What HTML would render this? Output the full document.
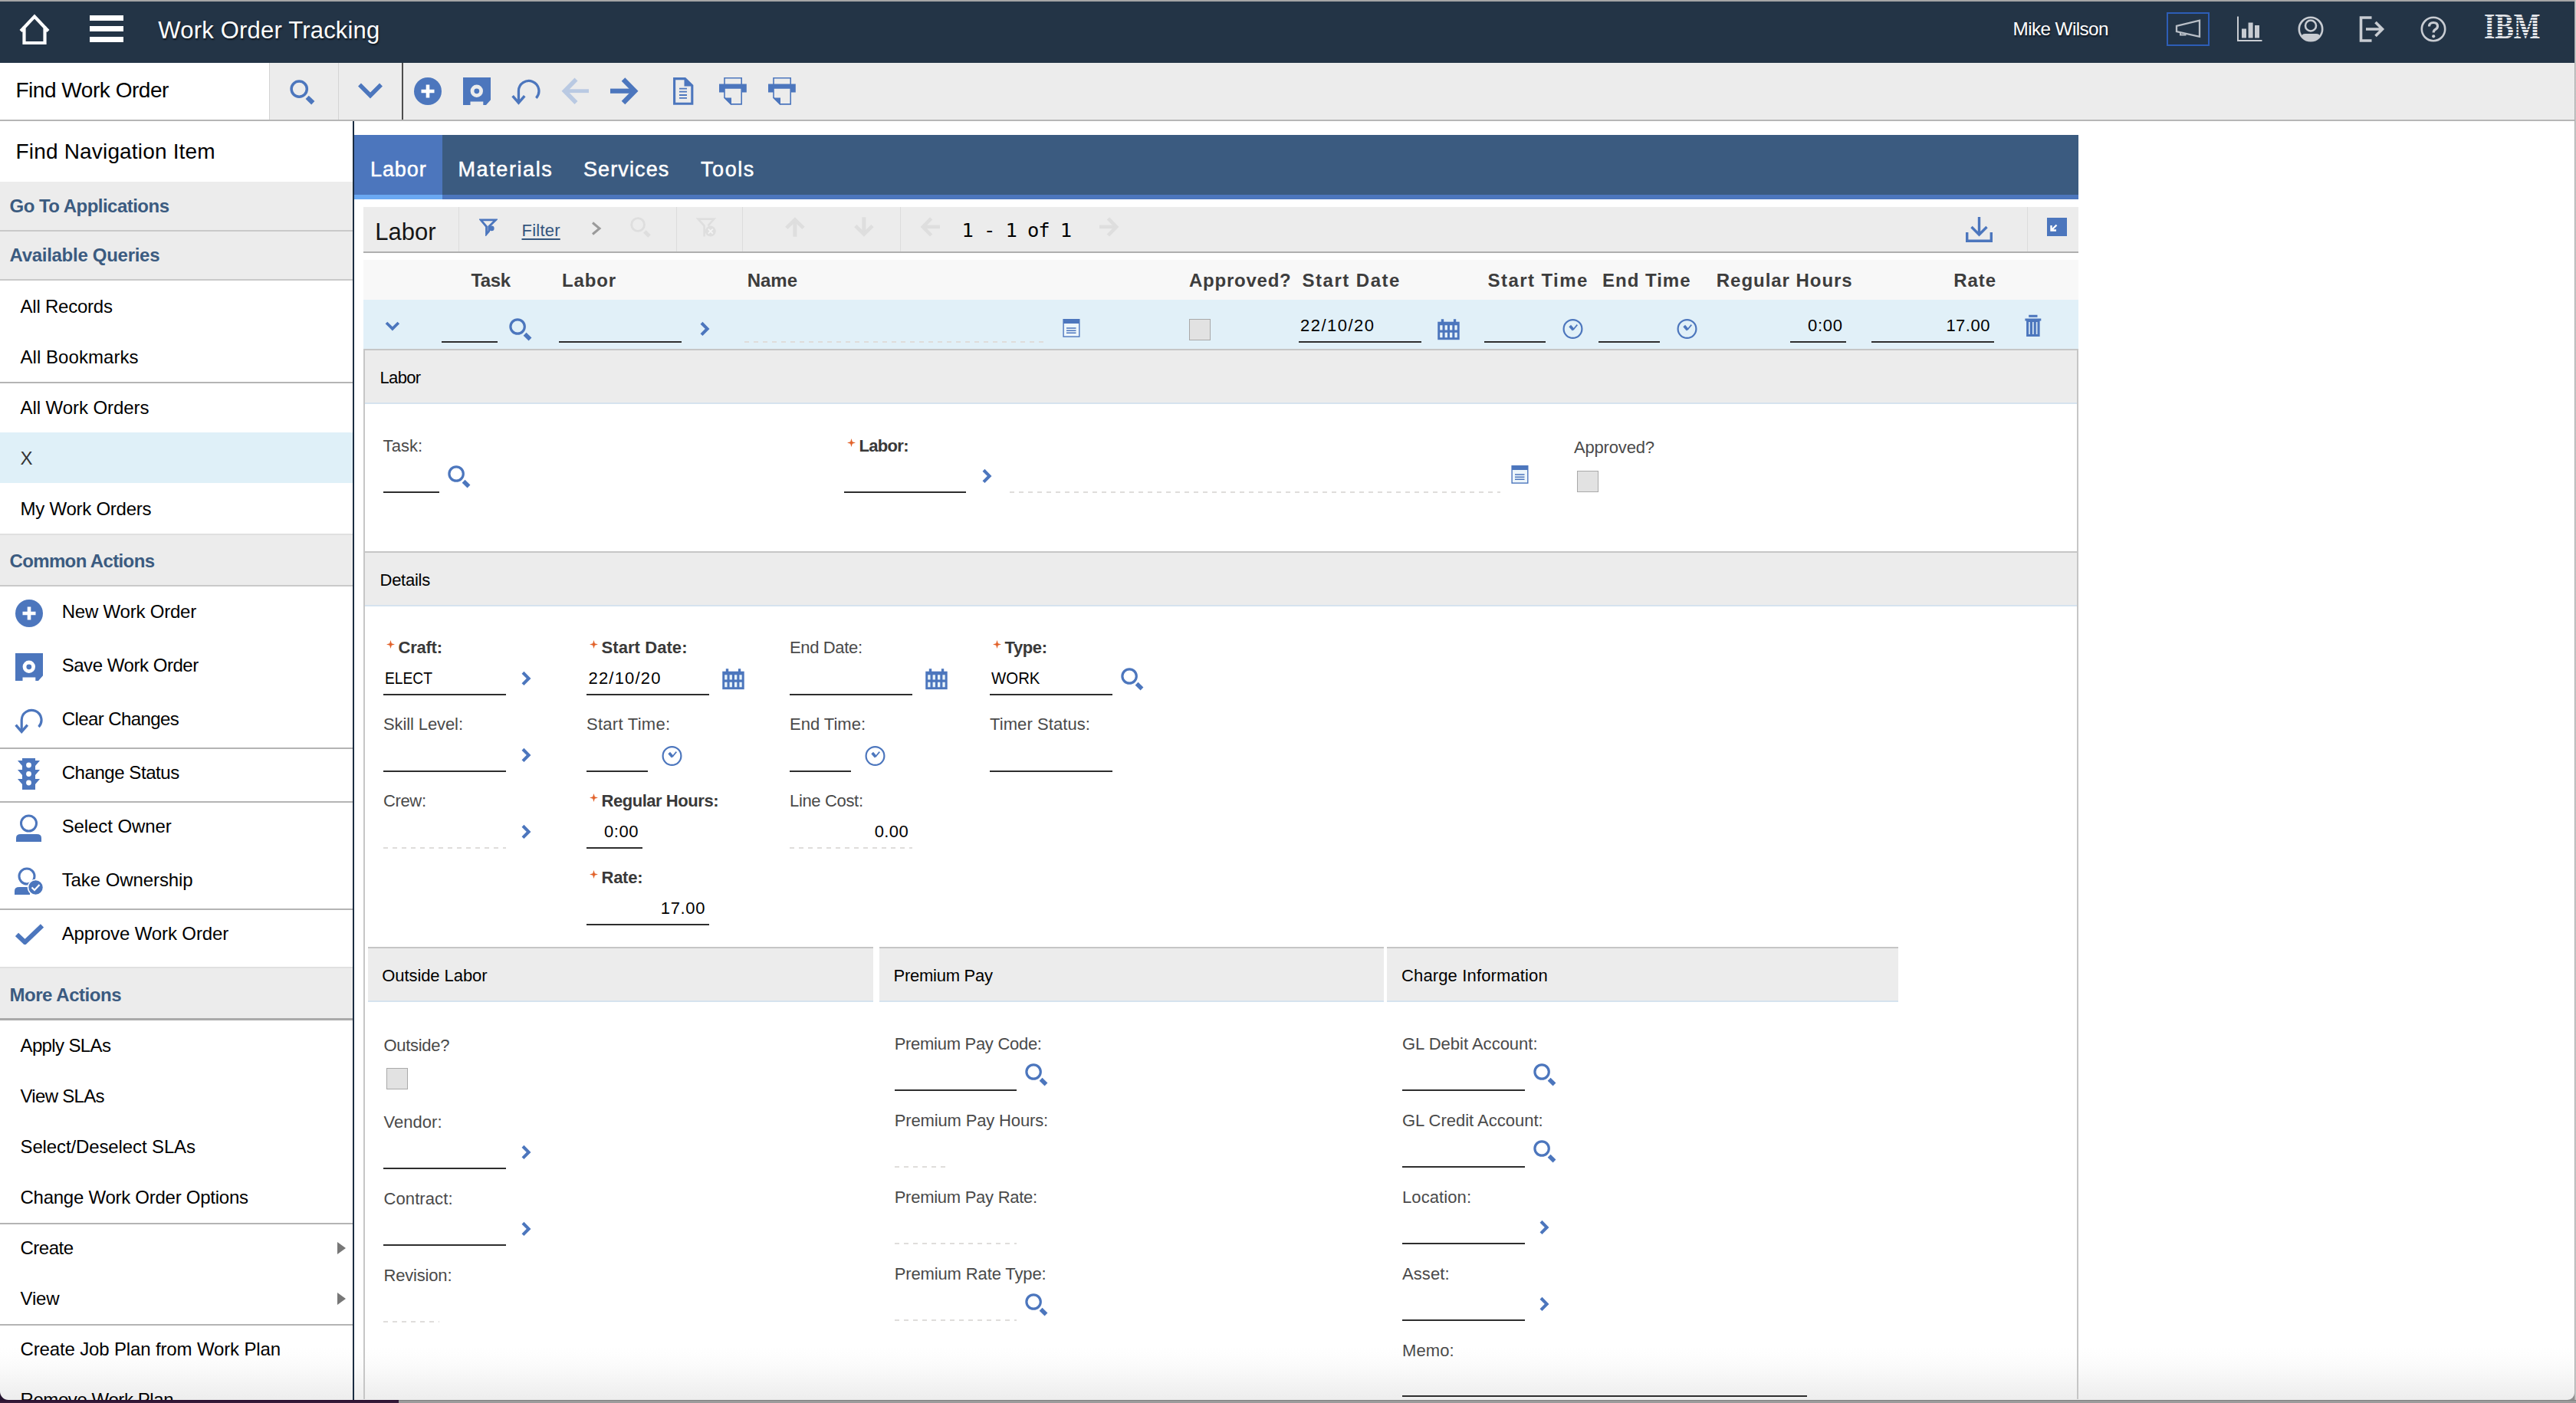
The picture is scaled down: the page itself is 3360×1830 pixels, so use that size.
<!DOCTYPE html>
<html lang="en"><head><meta charset="utf-8"><title>Work Order Tracking</title>
<style>
html,body{margin:0;padding:0;}
body{width:3360px;height:1830px;overflow:hidden;position:relative;background:#fff;font-family:"Liberation Sans",sans-serif;}
#app{position:absolute;left:0;top:0;width:3360px;height:1830px;overflow:hidden;}
#app div,#app span,#app svg{position:absolute;}
#app span{white-space:pre;line-height:1;}
</style></head><body><div id="app">
<div style="left:0px;top:0px;width:3360px;height:2px;background:#a6a6a6;"></div>
<div style="left:0px;top:2px;width:3358px;height:80px;background:#233446;"></div>
<div style="left:0px;top:82px;width:3360px;height:74px;background:#ececec;"></div>
<div style="left:0px;top:156px;width:3360px;height:2px;background:#b6b6b6;"></div>
<div style="left:0px;top:82px;width:351px;height:74px;background:#fff;"></div>
<div style="left:351px;top:82px;width:1px;height:74px;background:#d4d4d4;"></div>
<div style="left:441px;top:82px;width:1px;height:74px;background:#d4d4d4;"></div>
<div style="left:524px;top:82px;width:2px;height:74px;background:#4d4d4d;"></div>
<div style="left:3358px;top:0px;width:2px;height:1830px;background:none;background:linear-gradient(90deg,#a2a2a2,#d4d4d4);"></div>
<div style="left:117px;top:20px;width:44px;height:7px;background:#fff;"></div>
<div style="left:117px;top:34px;width:44px;height:7px;background:#fff;"></div>
<div style="left:117px;top:47.5px;width:44px;height:7px;background:#fff;"></div>
<div style="left:2826px;top:16px;width:56px;height:44px;background:none;border:2px solid #2d5db6;box-sizing:border-box;"></div>
<div style="left:462px;top:1757px;width:2896px;height:69px;background:linear-gradient(180deg,rgba(237,237,237,0) 0%,rgba(237,237,237,.22) 35%,rgba(237,237,237,1) 100%);"></div>
<div style="left:0;top:1757px;width:460px;height:69px;background:linear-gradient(180deg,rgba(237,237,237,0) 0%,rgba(237,237,237,.22) 35%,rgba(237,237,237,1) 100%);"></div>
<div style="left:460px;top:158px;width:2px;height:1668px;background:#1b2d42;"></div>
<div style="left:0px;top:237px;width:460px;height:63px;background:#ececec;"></div>
<div style="left:0px;top:300px;width:460px;height:2px;background:#c9c9c9;"></div>
<div style="left:0px;top:302px;width:460px;height:62px;background:#ececec;"></div>
<div style="left:0px;top:364px;width:460px;height:2px;background:#c9c9c9;"></div>
<div style="left:0px;top:498px;width:460px;height:2px;background:#b4b4b4;"></div>
<div style="left:0px;top:564px;width:460px;height:66px;background:#dff0f8;"></div>
<div style="left:0px;top:696px;width:460px;height:2px;background:#e0e0e0;"></div>
<div style="left:0px;top:698px;width:460px;height:65px;background:#ececec;"></div>
<div style="left:0px;top:763px;width:460px;height:2px;background:#c9c9c9;"></div>
<div style="left:0px;top:975px;width:460px;height:2px;background:#b4b4b4;"></div>
<div style="left:0px;top:1044.5px;width:460px;height:2px;background:#b4b4b4;"></div>
<div style="left:0px;top:1185px;width:460px;height:2px;background:#b4b4b4;"></div>
<div style="left:0px;top:1261px;width:460px;height:2px;background:#e0e0e0;"></div>
<div style="left:0px;top:1263px;width:460px;height:65px;background:#ececec;"></div>
<div style="left:0px;top:1328px;width:460px;height:3px;background:#aaa;"></div>
<div style="left:0px;top:1594.5px;width:460px;height:2px;background:#b4b4b4;"></div>
<div style="left:0px;top:1727px;width:460px;height:2px;background:#b4b4b4;"></div>
<div style="left:462px;top:176px;width:2249px;height:78px;background:#3b5b80;"></div>
<div style="left:462px;top:254px;width:2249px;height:5.6px;background:#4c76bd;"></div>
<div style="left:462px;top:176px;width:115px;height:78px;background:#4c76bd;"></div>
<div style="left:462px;top:254px;width:115px;height:5.6px;background:#6aa8f2;"></div>
<div style="left:474px;top:270px;width:2237px;height:58px;background:#ececec;"></div>
<div style="left:474px;top:328px;width:2237px;height:2px;background:#b0b0b0;"></div>
<div style="left:597.5px;top:270px;width:1.5px;height:58px;background:#dcdcdc;"></div>
<div style="left:881.5px;top:270px;width:1.5px;height:58px;background:#dcdcdc;"></div>
<div style="left:967.7px;top:270px;width:1.5px;height:58px;background:#dcdcdc;"></div>
<div style="left:1173.7px;top:270px;width:1.5px;height:58px;background:#dcdcdc;"></div>
<div style="left:2643.5px;top:270px;width:1.5px;height:58px;background:#dcdcdc;"></div>
<div style="left:474px;top:339px;width:2237px;height:52px;background:#f8f8f8;"></div>
<div style="left:474px;top:391px;width:2237px;height:64px;background:#e1f0f8;"></div>
<div style="left:474px;top:455px;width:2237px;height:2px;background:#c6c6c6;"></div>
<div style="left:576px;top:445px;width:73px;height:2px;background:#2e2e2e;"></div>
<div style="left:729px;top:445px;width:160px;height:2px;background:#2e2e2e;"></div>
<div style="left:971px;top:445px;width:396px;height:2px;background:none;background-image:repeating-linear-gradient(90deg,#dfdddb 0 6px,transparent 6px 12px);"></div>
<div style="left:1551px;top:415.5px;width:28px;height:28px;background:#e2e2e2;border:1.5px solid #a9a9a9;box-sizing:border-box;"></div>
<div style="left:1693.5px;top:445px;width:160.0px;height:2px;background:#2e2e2e;"></div>
<div style="left:1936px;top:445px;width:79.5px;height:2px;background:#2e2e2e;"></div>
<div style="left:2085px;top:445px;width:79.5px;height:2px;background:#2e2e2e;"></div>
<div style="left:2334.5px;top:445px;width:73.0px;height:2px;background:#2e2e2e;"></div>
<div style="left:2441px;top:445px;width:159.5px;height:2px;background:#2e2e2e;"></div>
<div style="left:474px;top:457px;width:2px;height:1368px;background:#c6c6c6;"></div>
<div style="left:2709px;top:457px;width:2px;height:1368px;background:#c6c6c6;"></div>
<div style="left:476px;top:457px;width:2233px;height:68px;background:#ececec;"></div>
<div style="left:476px;top:525px;width:2233px;height:2px;background:#d6e3ef;"></div>
<div style="left:476px;top:719px;width:2233px;height:2px;background:#c6c6c6;"></div>
<div style="left:476px;top:721px;width:2233px;height:68px;background:#ececec;"></div>
<div style="left:476px;top:789px;width:2233px;height:2px;background:#d6e3ef;"></div>
<div style="left:480px;top:1235px;width:659px;height:2px;background:#c6c6c6;"></div>
<div style="left:480px;top:1237px;width:659px;height:68px;background:#ececec;"></div>
<div style="left:480px;top:1305px;width:659px;height:2px;background:#d6e3ef;"></div>
<div style="left:1147px;top:1235px;width:658px;height:2px;background:#c6c6c6;"></div>
<div style="left:1147px;top:1237px;width:658px;height:68px;background:#ececec;"></div>
<div style="left:1147px;top:1305px;width:658px;height:2px;background:#d6e3ef;"></div>
<div style="left:1809px;top:1235px;width:667px;height:2px;background:#c6c6c6;"></div>
<div style="left:1809px;top:1237px;width:667px;height:68px;background:#ececec;"></div>
<div style="left:1809px;top:1305px;width:667px;height:2px;background:#d6e3ef;"></div>
<div style="left:499.6px;top:641px;width:73.19999999999993px;height:2px;background:#2e2e2e;"></div>
<div style="left:1100.8px;top:641px;width:159.70000000000005px;height:2px;background:#2e2e2e;"></div>
<div style="left:1317px;top:641px;width:640px;height:2px;background:none;background-image:repeating-linear-gradient(90deg,#dfdddb 0 6px,transparent 6px 12px);"></div>
<div style="left:2057px;top:613.5px;width:28px;height:28px;background:#e2e2e2;border:1.5px solid #a9a9a9;box-sizing:border-box;"></div>
<div style="left:500px;top:905px;width:160px;height:2px;background:#2e2e2e;"></div>
<div style="left:765px;top:905px;width:159.5px;height:2px;background:#2e2e2e;"></div>
<div style="left:1030px;top:905px;width:160px;height:2px;background:#2e2e2e;"></div>
<div style="left:1291px;top:905px;width:159.5px;height:2px;background:#2e2e2e;"></div>
<div style="left:500px;top:1005px;width:160px;height:2px;background:#2e2e2e;"></div>
<div style="left:765px;top:1005px;width:79.5px;height:2px;background:#2e2e2e;"></div>
<div style="left:1030px;top:1005px;width:80px;height:2px;background:#2e2e2e;"></div>
<div style="left:1291px;top:1005px;width:159.5px;height:2px;background:#2e2e2e;"></div>
<div style="left:500px;top:1105px;width:160px;height:2px;background:none;background-image:repeating-linear-gradient(90deg,#dfdddb 0 6px,transparent 6px 12px);"></div>
<div style="left:765px;top:1105px;width:73px;height:2px;background:#2e2e2e;"></div>
<div style="left:1030px;top:1105px;width:160px;height:2px;background:none;background-image:repeating-linear-gradient(90deg,#dfdddb 0 6px,transparent 6px 12px);"></div>
<div style="left:765px;top:1205px;width:159.5px;height:2px;background:#2e2e2e;"></div>
<div style="left:503.8px;top:1392.8px;width:28px;height:28px;background:#e2e2e2;border:1.5px solid #a9a9a9;box-sizing:border-box;"></div>
<div style="left:500px;top:1522.8px;width:160px;height:2px;background:#2e2e2e;"></div>
<div style="left:500px;top:1622.8px;width:160px;height:2px;background:#2e2e2e;"></div>
<div style="left:500px;top:1722.8px;width:73px;height:2px;background:none;background-image:repeating-linear-gradient(90deg,#dfdddb 0 6px,transparent 6px 12px);"></div>
<div style="left:1166.7px;top:1420.6px;width:159.29999999999995px;height:2px;background:#2e2e2e;"></div>
<div style="left:1166.7px;top:1520.6px;width:72.59999999999991px;height:2px;background:none;background-image:repeating-linear-gradient(90deg,#dfdddb 0 6px,transparent 6px 12px);"></div>
<div style="left:1166.7px;top:1620.6px;width:159.29999999999995px;height:2px;background:none;background-image:repeating-linear-gradient(90deg,#dfdddb 0 6px,transparent 6px 12px);"></div>
<div style="left:1166.7px;top:1720.6px;width:159.29999999999995px;height:2px;background:none;background-image:repeating-linear-gradient(90deg,#dfdddb 0 6px,transparent 6px 12px);"></div>
<div style="left:1829px;top:1420.6px;width:160px;height:2px;background:#2e2e2e;"></div>
<div style="left:1829px;top:1520.6px;width:160px;height:2px;background:#2e2e2e;"></div>
<div style="left:1829px;top:1620.6px;width:160px;height:2px;background:#2e2e2e;"></div>
<div style="left:1829px;top:1720.6px;width:160px;height:2px;background:#2e2e2e;"></div>
<div style="left:1829px;top:1820.3px;width:528px;height:2px;background:#2e2e2e;"></div>
<div style="left:0;top:1826px;width:3360px;height:4px;background:#9b9b9b;border-top:1px solid #808080;box-sizing:border-box;z-index:6;"></div>
<div style="left:0;top:1826px;width:520px;height:4px;background:linear-gradient(180deg,#2a0f2e,#3a1f3e);z-index:6;"></div>
<svg style="left:22px;top:14px;" width="46" height="48" viewBox="0 0 46 48"><path d="M6.5 25 L23 7.5 L39.5 25 M9.5 22.5 V42 H36.5 V22.5" fill="none" stroke="#fff" stroke-width="4.2" stroke-linejoin="miter" stroke-linecap="square"/></svg>
<svg style="left:377.5px;top:103.5px;" width="33" height="33" viewBox="0 0 30 30"><circle cx="11.1" cy="11" r="9.2" fill="none" stroke="#4c76bd" stroke-width="3.2"/><path d="M20.6 20.8L27.5 27.5" stroke="#4c76bd" stroke-width="5.5" stroke-linecap="butt"/></svg>
<svg style="left:466px;top:107px;" width="34" height="24" viewBox="0 0 34 24"><path d="M3 3.5 L17 17.5 L31 3.5" fill="none" stroke="#4c76bd" stroke-width="5.5"/></svg>
<svg style="left:540px;top:101px;" width="36" height="36" viewBox="0 0 36 36"><circle cx="18" cy="18" r="18" fill="#4c76bd"/><path d="M18 9.5V26.5M9.5 18H26.5" stroke="#fff" stroke-width="4.6"/></svg>
<svg style="left:604px;top:101px;" width="36" height="36" viewBox="0 0 36 36"><path d="M0 0H36V29.2L30 36H26.3V31.4H9.5V36H0Z" fill="#4c76bd"/><circle cx="17.8" cy="17.8" r="5.8" fill="none" stroke="#ececec" stroke-width="4.8"/></svg>
<svg style="left:666.5px;top:102px;" width="39" height="34.89473684210526" viewBox="0 0 38 34"><path d="M9.2 31V16A12.9 12.9 0 1 1 31.5 25.1" fill="none" stroke="#4c76bd" stroke-width="3.2"/><path d="M1.6 22.6L9.2 31.3L16.8 22.6" fill="none" stroke="#4c76bd" stroke-width="3.4"/></svg>
<svg style="left:732px;top:101px;" width="37" height="36" viewBox="0 0 37 36"><path d="M36 17.7H7" fill="none" stroke="#b9c9e2" stroke-width="4.8"/><path d="M19.5 2.5L4.5 17.7L19.5 33" fill="none" stroke="#b9c9e2" stroke-width="5.6"/></svg>
<svg style="left:796px;top:101px;" width="37" height="36" viewBox="0 0 37 36"><path d="M0 17.7H29" fill="none" stroke="#4c76bd" stroke-width="6.2"/><path d="M17 2.5L32 17.7L17 33" fill="none" stroke="#4c76bd" stroke-width="6.4"/></svg>
<svg style="left:878px;top:100.9px;" width="27" height="36" viewBox="0 0 27 36"><path d="M1.6 1.6H15.5L24.8 10.6V34.2H1.6Z" fill="none" stroke="#4c76bd" stroke-width="3.1"/><path d="M14.5 0.5L26 11.5H14.5Z" fill="#4c76bd"/><path d="M8 14.7H18M8 18.6H18M8 23H18M8 26.8H18" stroke="#4c76bd" stroke-width="1.8"/></svg>
<svg style="left:938px;top:100.9px;" width="36" height="36" viewBox="0 0 36 36"><path d="M7 9V0.8H29.2V9" fill="none" stroke="#4c76bd" stroke-width="1.6"/><path d="M0 8.5H35.8V19.4H0Z" fill="#4c76bd"/><path d="M7 13.9H29.2V34.9H15.5L7 26.4Z" fill="#ececec" stroke="#4c76bd" stroke-width="1.6"/><path d="M6.2 26.4H16V35.7H15.5Z" fill="#4c76bd"/></svg>
<svg style="left:1002.2px;top:100.9px;" width="36" height="36" viewBox="0 0 36 36"><path d="M7 9V0.8H29.2V9" fill="none" stroke="#4c76bd" stroke-width="1.6"/><path d="M0 8.5H35.8V19.4H0Z" fill="#4c76bd"/><path d="M7 13.9H29.2V34.9H15.5L7 26.4Z" fill="#ececec" stroke="#4c76bd" stroke-width="1.6"/><path d="M6.2 26.4H16V35.7H15.5Z" fill="#4c76bd"/></svg>
<svg style="left:2836px;top:24px;" width="36" height="26" viewBox="0 0 36 26"><path d="M3 9.8L33 2.6V23.8L3 17.2Z" fill="none" stroke="#b9bfc7" stroke-width="2.3" stroke-linejoin="miter"/><path d="M8 18V21.5H14.5V19.5" fill="none" stroke="#b9bfc7" stroke-width="2"/></svg>
<svg style="left:2918px;top:21px;" width="33" height="33" viewBox="0 0 33 33"><path d="M1 0.5V32H32.5" fill="none" stroke="#c8ccd2" stroke-width="2"/><path d="M6 16.5H12V28.5H6ZM14.6 8.5H20.6V28.5H14.6ZM23 12H29V28.5H23Z" fill="#c8ccd2"/></svg>
<svg style="left:2997px;top:21px;" width="34" height="34" viewBox="0 0 34 34"><defs><clipPath id="uc"><circle cx="17" cy="17" r="15"/></clipPath></defs><circle cx="17" cy="17" r="15.2" fill="none" stroke="#c8ccd2" stroke-width="2.6"/><circle cx="17" cy="12.5" r="7" fill="none" stroke="#c8ccd2" stroke-width="2.6"/><path d="M5 34V27Q5 23 10 23H24Q29 23 29 27V34Z" fill="#c8ccd2" clip-path="url(#uc)"/></svg>
<svg style="left:3077px;top:21px;" width="34" height="34" viewBox="0 0 34 34"><path d="M16.5 2H2.5V32H16.5" fill="none" stroke="#c8ccd2" stroke-width="3.6"/><path d="M9 17H30M21.5 8L30.5 17L21.5 26" fill="none" stroke="#c8ccd2" stroke-width="3.6"/></svg>
<svg style="left:3157px;top:21px;" width="34" height="34" viewBox="0 0 34 34"><circle cx="17" cy="17" r="15.2" fill="none" stroke="#c8ccd2" stroke-width="2.6"/><path d="M11.5 13.5Q11.5 8.5 17 8.5Q22.5 8.5 22.5 13Q22.5 16 19.5 17.5Q17.2 18.7 17.2 21.5" fill="none" stroke="#c8ccd2" stroke-width="3.2"/><circle cx="17.2" cy="26.3" r="2.1" fill="#c8ccd2"/></svg>
<svg style="left:440px;top:1620px;" width="11" height="16" viewBox="0 0 11 16"><path d="M0 0L11 8L0 16Z" fill="#777"/></svg>
<svg style="left:440px;top:1686px;" width="11" height="16" viewBox="0 0 11 16"><path d="M0 0L11 8L0 16Z" fill="#777"/></svg>
<svg style="left:20px;top:782px;" width="36" height="36" viewBox="0 0 36 36"><circle cx="18" cy="18" r="18" fill="#4c76bd"/><path d="M18 9.5V26.5M9.5 18H26.5" stroke="#fff" stroke-width="4.6"/></svg>
<svg style="left:20px;top:852px;" width="36" height="36" viewBox="0 0 36 36"><path d="M0 0H36V29.2L30 36H26.3V31.4H9.5V36H0Z" fill="#4c76bd"/><circle cx="17.8" cy="17.8" r="5.8" fill="none" stroke="#fff" stroke-width="4.8"/></svg>
<svg style="left:19px;top:923px;" width="38" height="34.0" viewBox="0 0 38 34"><path d="M9.2 31V16A12.9 12.9 0 1 1 31.5 25.1" fill="none" stroke="#4c76bd" stroke-width="3.2"/><path d="M1.6 22.6L9.2 31.3L16.8 22.6" fill="none" stroke="#4c76bd" stroke-width="3.4"/></svg>
<svg style="left:23px;top:989px;" width="29" height="41" viewBox="0 0 29 41"><path d="M6 0H23V3H29L23 10V15H29L23 22V27H29L23 34V41H6V34L0 27H6V22L0 15H6V10L0 3H6Z" fill="#4c76bd"/><circle cx="14.5" cy="9" r="3.4" fill="#fff"/><circle cx="14.5" cy="20.5" r="3.4" fill="#fff"/><circle cx="14.5" cy="32" r="3.4" fill="#fff"/></svg>
<svg style="left:21px;top:1062px;" width="33" height="36" viewBox="0 0 33 36"><circle cx="16.5" cy="12" r="10" fill="none" stroke="#4c76bd" stroke-width="3"/><path d="M0 36V31Q0 26 6 26H27Q33 26 33 31V36Z" fill="#4c76bd"/></svg>
<svg style="left:19px;top:1131px;" width="38" height="37" viewBox="0 0 38 37"><circle cx="16" cy="12" r="10" fill="none" stroke="#4c76bd" stroke-width="3"/><path d="M0 36V31Q0 26 6 26H20V36Z" fill="#4c76bd"/><circle cx="27.5" cy="26.5" r="10" fill="#4c76bd" stroke="#fff" stroke-width="1.5"/><path d="M22.5 26.5L26 30L32.5 23" fill="none" stroke="#fff" stroke-width="2.2"/></svg>
<svg style="left:20px;top:1205px;" width="37" height="27" viewBox="0 0 37 27"><path d="M2 14L12.5 24L35 2.5" fill="none" stroke="#4c76bd" stroke-width="6"/></svg>
<svg style="left:625px;top:284.5px;" width="24" height="23" viewBox="0 0 24 23"><path d="M2 1.8H21.6L12.7 10.6V16.6L9.5 20.3V10.6Z" fill="none" stroke="#4c76bd" stroke-width="2.8" stroke-linejoin="miter"/><circle cx="16.3" cy="12.9" r="3.3" fill="#4c76bd"/></svg>
<svg style="left:770px;top:288px;" width="16" height="20" viewBox="0 0 16 20"><path d="M3 2.5L12 10L3 17.5" fill="none" stroke="#9a9a9a" stroke-width="3"/></svg>
<svg style="left:822px;top:283.2px;" width="27.3" height="27.3" viewBox="0 0 30 30"><circle cx="11.1" cy="11" r="9.2" fill="none" stroke="#dedede" stroke-width="3.2"/><path d="M20.6 20.8L27.5 27.5" stroke="#dedede" stroke-width="5.5" stroke-linecap="butt"/></svg>
<svg style="left:908px;top:283px;" width="27" height="27" viewBox="0 0 27 27"><path d="M10.6 25.5V11.6L2.6 2.6H23.4L15.6 11.4" fill="none" stroke="#dedede" stroke-width="2.6" stroke-linejoin="miter"/><circle cx="18.8" cy="18.6" r="7" fill="#dedede"/><path d="M15.8 15.6L21.8 21.6M21.8 15.6L15.8 21.6" stroke="#f3f3f3" stroke-width="1.9"/></svg>
<svg style="left:1024px;top:283px;" width="26" height="26" viewBox="0 0 26 26"><path d="M12.9 25.7V4" fill="none" stroke="#dedede" stroke-width="5"/><path d="M1.8 14.4L12.9 3.6L24 14.4" fill="none" stroke="#dedede" stroke-width="4.8"/></svg>
<svg style="left:1114px;top:283px;" width="26" height="26" viewBox="0 0 26 26"><path d="M12.9 0.3V22" fill="none" stroke="#dedede" stroke-width="5"/><path d="M1.8 11.6L12.9 22.4L24 11.6" fill="none" stroke="#dedede" stroke-width="4.8"/></svg>
<svg style="left:1200px;top:283px;" width="26" height="26" viewBox="0 0 26 26"><path d="M26 12.9H5" fill="none" stroke="#dedede" stroke-width="4.6"/><path d="M14.6 1.8L3.8 12.9L14.6 24" fill="none" stroke="#dedede" stroke-width="4.6"/></svg>
<svg style="left:1433.5px;top:283px;" width="26" height="26" viewBox="0 0 26 26"><path d="M0 12.9H21" fill="none" stroke="#dedede" stroke-width="4.6"/><path d="M11.4 1.8L22.2 12.9L11.4 24" fill="none" stroke="#dedede" stroke-width="4.6"/></svg>
<svg style="left:2564px;top:283px;" width="35" height="33" viewBox="0 0 35 33"><path d="M17.5 0V22M7.5 13L17.5 23L27.5 13" fill="none" stroke="#4c76bd" stroke-width="3.4"/><path d="M1.7 20V31.3H33.3V20" fill="none" stroke="#4c76bd" stroke-width="3.4"/></svg>
<svg style="left:2670px;top:283.5px;" width="26" height="24" viewBox="0 0 26 24"><rect width="26" height="24" fill="#4c76bd"/><path d="M12.5 9.5L6 16M5.5 10V16.5H12" fill="none" stroke="#fff" stroke-width="2.4"/></svg>
<svg style="left:501px;top:417.5px;" width="22" height="16" viewBox="0 0 22 16"><path d="M3 3L10.9 10.8L18.8 3" fill="none" stroke="#4c76bd" stroke-width="3.8"/></svg>
<svg style="left:664px;top:415px;" width="30" height="30" viewBox="0 0 30 30"><circle cx="11.1" cy="11" r="9.2" fill="none" stroke="#4c76bd" stroke-width="3.2"/><path d="M20.6 20.8L27.5 27.5" stroke="#4c76bd" stroke-width="5.5" stroke-linecap="butt"/></svg>
<svg style="left:912px;top:419px;" width="15" height="20" viewBox="0 0 15 20"><path d="M3 2.2L10.6 9.9L3 17.6" fill="none" stroke="#4c76bd" stroke-width="4.1"/></svg>
<svg style="left:1385.5px;top:416.2px;" width="23" height="24" viewBox="0 0 23 24"><path d="M0.4 0H22.5V23.8H0.4Z" fill="#4c76bd"/><path d="M1.8 6H21.1V22.4H1.8Z" fill="#edf6fb"/><path d="M5 12H17.5M5 15.2H17.5M5 18.3H17.5" stroke="#4c76bd" stroke-width="1.5"/></svg>
<svg style="left:1874.5px;top:416px;" width="29" height="28" viewBox="0 0 29 28"><path d="M0.25 3.7H28.7V27.2H0.25Z" fill="#4c76bd"/><path d="M4.8 0.2H8.2V4H4.8ZM20.9 0.2H24.2V4H20.9Z" fill="#4c76bd"/><path d="M3.2 8.2H6.5V14.6H3.2ZM9.6 8.2H12.9V14.6H9.6ZM16 8.2H19.3V14.6H16ZM22.4 8.2H25.7V14.6H22.4ZM3.2 17.8H6.5V24.2H3.2ZM9.6 17.8H12.9V24.2H9.6ZM16 17.8H19.3V24.2H16ZM22.4 17.8H25.7V24.2H22.4Z" fill="#e9f4fa"/></svg>
<svg style="left:2037.5px;top:416px;" width="27" height="27" viewBox="0 0 27 27"><circle cx="13.5" cy="13" r="11.9" fill="none" stroke="#4c76bd" stroke-width="2.2"/><path d="M9.7 9L14.2 14.2" fill="none" stroke="#4c76bd" stroke-width="3.6"/><path d="M13.8 14.2L19.3 7.6" fill="none" stroke="#4c76bd" stroke-width="1.7"/></svg>
<svg style="left:2186.5px;top:416px;" width="27" height="27" viewBox="0 0 27 27"><circle cx="13.5" cy="13" r="11.9" fill="none" stroke="#4c76bd" stroke-width="2.2"/><path d="M9.7 9L14.2 14.2" fill="none" stroke="#4c76bd" stroke-width="3.6"/><path d="M13.8 14.2L19.3 7.6" fill="none" stroke="#4c76bd" stroke-width="1.7"/></svg>
<svg style="left:2641px;top:410px;" width="22" height="30" viewBox="0 0 22 30"><path d="M5.2 0.7H16.5V3.7H5.2ZM0.4 5.4H21.3V8.6H0.4ZM2.1 8.6H19.6V29.1H2.1Z" fill="#4c76bd"/><path d="M5.1 10.1H6.8V25.9H5.1ZM10 10.1H11.7V25.9H10ZM14.8 10.1H16.5V25.9H14.8Z" fill="#d6e6f3"/></svg>
<svg style="left:584px;top:607px;" width="30" height="30" viewBox="0 0 30 30"><circle cx="11.1" cy="11" r="9.2" fill="none" stroke="#4c76bd" stroke-width="3.2"/><path d="M20.6 20.8L27.5 27.5" stroke="#4c76bd" stroke-width="5.5" stroke-linecap="butt"/></svg>
<svg style="left:1104.6px;top:572.4px;" width="11" height="11" viewBox="0 0 11 11"><path d="M5.5 0L6.8 4.2L11 5.5L6.8 6.8L5.5 11L4.2 6.8L0 5.5L4.2 4.2Z" fill="#e2622a"/></svg>
<svg style="left:1279.5px;top:611px;" width="15" height="20" viewBox="0 0 15 20"><path d="M3 2.2L10.6 9.9L3 17.6" fill="none" stroke="#4c76bd" stroke-width="4.1"/></svg>
<svg style="left:1971px;top:607.2px;" width="23" height="24" viewBox="0 0 23 24"><path d="M0.4 0H22.5V23.8H0.4Z" fill="#4c76bd"/><path d="M1.8 6H21.1V22.4H1.8Z" fill="#edf6fb"/><path d="M5 12H17.5M5 15.2H17.5M5 18.3H17.5" stroke="#4c76bd" stroke-width="1.5"/></svg>
<svg style="left:503.6px;top:835.4px;" width="11" height="11" viewBox="0 0 11 11"><path d="M5.5 0L6.8 4.2L11 5.5L6.8 6.8L5.5 11L4.2 6.8L0 5.5L4.2 4.2Z" fill="#e2622a"/></svg>
<svg style="left:679px;top:875px;" width="15" height="20" viewBox="0 0 15 20"><path d="M3 2.2L10.6 9.9L3 17.6" fill="none" stroke="#4c76bd" stroke-width="4.1"/></svg>
<svg style="left:768.6px;top:835.4px;" width="11" height="11" viewBox="0 0 11 11"><path d="M5.5 0L6.8 4.2L11 5.5L6.8 6.8L5.5 11L4.2 6.8L0 5.5L4.2 4.2Z" fill="#e2622a"/></svg>
<svg style="left:941.5px;top:872.2px;" width="29" height="28" viewBox="0 0 29 28"><path d="M0.25 3.7H28.7V27.2H0.25Z" fill="#4c76bd"/><path d="M4.8 0.2H8.2V4H4.8ZM20.9 0.2H24.2V4H20.9Z" fill="#4c76bd"/><path d="M3.2 8.2H6.5V14.6H3.2ZM9.6 8.2H12.9V14.6H9.6ZM16 8.2H19.3V14.6H16ZM22.4 8.2H25.7V14.6H22.4ZM3.2 17.8H6.5V24.2H3.2ZM9.6 17.8H12.9V24.2H9.6ZM16 17.8H19.3V24.2H16ZM22.4 17.8H25.7V24.2H22.4Z" fill="#e9f4fa"/></svg>
<svg style="left:1206.5px;top:872.2px;" width="29" height="28" viewBox="0 0 29 28"><path d="M0.25 3.7H28.7V27.2H0.25Z" fill="#4c76bd"/><path d="M4.8 0.2H8.2V4H4.8ZM20.9 0.2H24.2V4H20.9Z" fill="#4c76bd"/><path d="M3.2 8.2H6.5V14.6H3.2ZM9.6 8.2H12.9V14.6H9.6ZM16 8.2H19.3V14.6H16ZM22.4 8.2H25.7V14.6H22.4ZM3.2 17.8H6.5V24.2H3.2ZM9.6 17.8H12.9V24.2H9.6ZM16 17.8H19.3V24.2H16ZM22.4 17.8H25.7V24.2H22.4Z" fill="#e9f4fa"/></svg>
<svg style="left:1294.6px;top:835.4px;" width="11" height="11" viewBox="0 0 11 11"><path d="M5.5 0L6.8 4.2L11 5.5L6.8 6.8L5.5 11L4.2 6.8L0 5.5L4.2 4.2Z" fill="#e2622a"/></svg>
<svg style="left:1462px;top:871px;" width="30" height="30" viewBox="0 0 30 30"><circle cx="11.1" cy="11" r="9.2" fill="none" stroke="#4c76bd" stroke-width="3.2"/><path d="M20.6 20.8L27.5 27.5" stroke="#4c76bd" stroke-width="5.5" stroke-linecap="butt"/></svg>
<svg style="left:679px;top:975px;" width="15" height="20" viewBox="0 0 15 20"><path d="M3 2.2L10.6 9.9L3 17.6" fill="none" stroke="#4c76bd" stroke-width="4.1"/></svg>
<svg style="left:863px;top:973px;" width="27" height="27" viewBox="0 0 27 27"><circle cx="13.5" cy="13" r="11.9" fill="none" stroke="#4c76bd" stroke-width="2.2"/><path d="M9.7 9L14.2 14.2" fill="none" stroke="#4c76bd" stroke-width="3.6"/><path d="M13.8 14.2L19.3 7.6" fill="none" stroke="#4c76bd" stroke-width="1.7"/></svg>
<svg style="left:1128px;top:973px;" width="27" height="27" viewBox="0 0 27 27"><circle cx="13.5" cy="13" r="11.9" fill="none" stroke="#4c76bd" stroke-width="2.2"/><path d="M9.7 9L14.2 14.2" fill="none" stroke="#4c76bd" stroke-width="3.6"/><path d="M13.8 14.2L19.3 7.6" fill="none" stroke="#4c76bd" stroke-width="1.7"/></svg>
<svg style="left:679px;top:1075px;" width="15" height="20" viewBox="0 0 15 20"><path d="M3 2.2L10.6 9.9L3 17.6" fill="none" stroke="#4c76bd" stroke-width="4.1"/></svg>
<svg style="left:768.6px;top:1035.4px;" width="11" height="11" viewBox="0 0 11 11"><path d="M5.5 0L6.8 4.2L11 5.5L6.8 6.8L5.5 11L4.2 6.8L0 5.5L4.2 4.2Z" fill="#e2622a"/></svg>
<svg style="left:768.6px;top:1135.4px;" width="11" height="11" viewBox="0 0 11 11"><path d="M5.5 0L6.8 4.2L11 5.5L6.8 6.8L5.5 11L4.2 6.8L0 5.5L4.2 4.2Z" fill="#e2622a"/></svg>
<svg style="left:679px;top:1493.0px;" width="15" height="20" viewBox="0 0 15 20"><path d="M3 2.2L10.6 9.9L3 17.6" fill="none" stroke="#4c76bd" stroke-width="4.1"/></svg>
<svg style="left:679px;top:1593.0px;" width="15" height="20" viewBox="0 0 15 20"><path d="M3 2.2L10.6 9.9L3 17.6" fill="none" stroke="#4c76bd" stroke-width="4.1"/></svg>
<svg style="left:1336.7px;top:1387px;" width="30" height="30" viewBox="0 0 30 30"><circle cx="11.1" cy="11" r="9.2" fill="none" stroke="#4c76bd" stroke-width="3.2"/><path d="M20.6 20.8L27.5 27.5" stroke="#4c76bd" stroke-width="5.5" stroke-linecap="butt"/></svg>
<svg style="left:1336.7px;top:1687px;" width="30" height="30" viewBox="0 0 30 30"><circle cx="11.1" cy="11" r="9.2" fill="none" stroke="#4c76bd" stroke-width="3.2"/><path d="M20.6 20.8L27.5 27.5" stroke="#4c76bd" stroke-width="5.5" stroke-linecap="butt"/></svg>
<svg style="left:2000px;top:1387px;" width="30" height="30" viewBox="0 0 30 30"><circle cx="11.1" cy="11" r="9.2" fill="none" stroke="#4c76bd" stroke-width="3.2"/><path d="M20.6 20.8L27.5 27.5" stroke="#4c76bd" stroke-width="5.5" stroke-linecap="butt"/></svg>
<svg style="left:2000px;top:1487px;" width="30" height="30" viewBox="0 0 30 30"><circle cx="11.1" cy="11" r="9.2" fill="none" stroke="#4c76bd" stroke-width="3.2"/><path d="M20.6 20.8L27.5 27.5" stroke="#4c76bd" stroke-width="5.5" stroke-linecap="butt"/></svg>
<svg style="left:2007px;top:1591px;" width="15" height="20" viewBox="0 0 15 20"><path d="M3 2.2L10.6 9.9L3 17.6" fill="none" stroke="#4c76bd" stroke-width="4.1"/></svg>
<svg style="left:2007px;top:1691px;" width="15" height="20" viewBox="0 0 15 20"><path d="M3 2.2L10.6 9.9L3 17.6" fill="none" stroke="#4c76bd" stroke-width="4.1"/></svg>
<svg style="left:0;top:1815px;z-index:7;" width="11" height="11" viewBox="0 0 11 11"><path d="M0 0V11H11A11 11 0 0 1 0 0Z" fill="#24142f"/></svg>
<svg style="left:3349px;top:1817px;z-index:7;" width="9" height="9" viewBox="0 0 9 9"><path d="M9 0V9H0A9 9 0 0 0 9 0Z" fill="#8f8f8f"/></svg>
<span style="left:206.30px;top:23.76px;font-size:31px;color:#fff;letter-spacing:0.201px;text-shadow:1px 2px 2px rgba(0,0,0,.55);">Work Order Tracking</span>
<span style="left:2625.50px;top:26.43px;font-size:24.3px;color:#fff;letter-spacing:-0.595px;text-shadow:1px 2px 2px rgba(0,0,0,.55);">Mike Wilson</span>
<span style="left:20.40px;top:104.30px;font-size:28px;letter-spacing:-0.459px;">Find Work Order</span>
<span style="left:3239.60px;top:12.24px;font-size:46.5px;font-weight:700;color:#e2e4e8;font-family:'Liberation Serif',serif;transform-origin:0 0;transform:scaleX(0.79);">IBM</span>
<span style="left:20.60px;top:184.30px;font-size:28px;letter-spacing:0.169px;">Find Navigation Item</span>
<span style="left:12.50px;top:257.18px;font-size:24px;font-weight:700;color:#3b5b80;letter-spacing:-0.519px;">Go To Applications</span>
<span style="left:12.50px;top:321.18px;font-size:24px;font-weight:700;color:#3b5b80;letter-spacing:-0.284px;">Available Queries</span>
<span style="left:26.50px;top:388.18px;font-size:24px;letter-spacing:-0.222px;">All Records</span>
<span style="left:26.50px;top:454.18px;font-size:24px;letter-spacing:0.052px;">All Bookmarks</span>
<span style="left:26.50px;top:520.18px;font-size:24px;letter-spacing:-0.066px;">All Work Orders</span>
<span style="left:26.50px;top:586.18px;font-size:24px;color:#333;">X</span>
<span style="left:26.50px;top:652.18px;font-size:24px;letter-spacing:-0.249px;">My Work Orders</span>
<span style="left:12.50px;top:720.18px;font-size:24px;font-weight:700;color:#3b5b80;letter-spacing:-0.637px;">Common Actions</span>
<span style="left:80.70px;top:786.18px;font-size:24px;letter-spacing:-0.213px;">New Work Order</span>
<span style="left:80.70px;top:856.18px;font-size:24px;letter-spacing:-0.461px;">Save Work Order</span>
<span style="left:80.70px;top:926.18px;font-size:24px;letter-spacing:-0.591px;">Clear Changes</span>
<span style="left:80.70px;top:996.18px;font-size:24px;letter-spacing:-0.440px;">Change Status</span>
<span style="left:80.70px;top:1066.18px;font-size:24px;letter-spacing:-0.097px;">Select Owner</span>
<span style="left:80.70px;top:1136.18px;font-size:24px;letter-spacing:-0.083px;">Take Ownership</span>
<span style="left:80.70px;top:1206.18px;font-size:24px;letter-spacing:-0.126px;">Approve Work Order</span>
<span style="left:12.50px;top:1286.18px;font-size:24px;font-weight:700;color:#3b5b80;letter-spacing:-0.466px;">More Actions</span>
<span style="left:26.50px;top:1352.18px;font-size:24px;letter-spacing:-0.620px;">Apply SLAs</span>
<span style="left:26.50px;top:1418.18px;font-size:24px;letter-spacing:-0.703px;">View SLAs</span>
<span style="left:26.50px;top:1484.18px;font-size:24px;letter-spacing:-0.120px;">Select/Deselect SLAs</span>
<span style="left:26.50px;top:1550.18px;font-size:24px;letter-spacing:-0.258px;">Change Work Order Options</span>
<span style="left:26.50px;top:1616.18px;font-size:24px;letter-spacing:-0.509px;">Create</span>
<span style="left:26.50px;top:1682.18px;font-size:24px;letter-spacing:-0.198px;">View</span>
<span style="left:26.50px;top:1748.18px;font-size:24px;letter-spacing:-0.145px;">Create Job Plan from Work Plan</span>
<span style="left:26.50px;top:1814.18px;font-size:24px;letter-spacing:-0.420px;">Remove Work Plan</span>
<span style="left:483.00px;top:207.74px;font-size:27px;color:#fff;letter-spacing:0.909px;-webkit-text-stroke:0.5px #fff;">Labor</span>
<span style="left:597.50px;top:207.74px;font-size:27px;color:#fff;letter-spacing:1.596px;-webkit-text-stroke:0.5px #fff;">Materials</span>
<span style="left:761.00px;top:207.74px;font-size:27px;color:#fff;letter-spacing:1.110px;-webkit-text-stroke:0.5px #fff;">Services</span>
<span style="left:914.00px;top:207.74px;font-size:27px;color:#fff;letter-spacing:1.567px;-webkit-text-stroke:0.5px #fff;">Tools</span>
<span style="left:489.30px;top:286.56px;font-size:31px;color:#161616;letter-spacing:0.026px;">Labor</span>
<span style="left:680.50px;top:290.38px;font-size:22px;color:#34557d;letter-spacing:0.222px;text-decoration:underline;text-decoration-thickness:1.7px;text-underline-offset:2.5px;">Filter</span>
<span style="left:1254.60px;top:287.78px;font-size:25.5px;letter-spacing:-1.103px;font-family:'DejaVu Sans Mono',monospace;">1 - 1 of 1</span>
<span style="left:614.40px;top:353.68px;font-size:24px;font-weight:700;color:#3d3d3d;letter-spacing:-0.441px;">Task</span>
<span style="left:733.00px;top:353.68px;font-size:24px;font-weight:700;color:#3d3d3d;letter-spacing:0.832px;">Labor</span>
<span style="left:974.70px;top:353.68px;font-size:24px;font-weight:700;color:#3d3d3d;letter-spacing:-0.025px;">Name</span>
<span style="left:1551.00px;top:353.68px;font-size:24px;font-weight:700;color:#3d3d3d;letter-spacing:0.754px;">Approved?</span>
<span style="left:1698.60px;top:353.68px;font-size:24px;font-weight:700;color:#3d3d3d;letter-spacing:1.481px;">Start Date</span>
<span style="left:1940.60px;top:353.68px;font-size:24px;font-weight:700;color:#3d3d3d;letter-spacing:1.418px;">Start Time</span>
<span style="left:2090.00px;top:353.68px;font-size:24px;font-weight:700;color:#3d3d3d;letter-spacing:0.989px;">End Time</span>
<span style="left:2238.80px;top:353.68px;font-size:24px;font-weight:700;color:#3d3d3d;letter-spacing:0.960px;">Regular Hours</span>
<span style="left:2548.30px;top:353.68px;font-size:24px;font-weight:700;color:#3d3d3d;letter-spacing:0.890px;">Rate</span>
<span style="left:1696.00px;top:414.38px;font-size:22px;letter-spacing:1.480px;">22/10/20</span>
<span style="left:2358.00px;top:414.38px;font-size:22px;letter-spacing:0.724px;">0:00</span>
<span style="left:2538.40px;top:414.38px;font-size:22px;letter-spacing:0.484px;">17.00</span>
<span style="left:495.50px;top:482.38px;font-size:22px;letter-spacing:-0.670px;">Labor</span>
<span style="left:495.50px;top:746.38px;font-size:22px;letter-spacing:-0.258px;">Details</span>
<span style="left:498.20px;top:1262.38px;font-size:22px;letter-spacing:-0.067px;">Outside Labor</span>
<span style="left:1165.50px;top:1262.38px;font-size:22px;letter-spacing:-0.255px;">Premium Pay</span>
<span style="left:1828.00px;top:1262.38px;font-size:22px;letter-spacing:0.140px;">Charge Information</span>
<span style="left:499.60px;top:571.38px;font-size:22px;color:#4a4a4a;letter-spacing:0.035px;">Task:</span>
<span style="left:1120.50px;top:571.38px;font-size:22px;font-weight:700;color:#393939;letter-spacing:-0.691px;">Labor:</span>
<span style="left:2053.00px;top:572.88px;font-size:22px;color:#4a4a4a;letter-spacing:-0.178px;">Approved?</span>
<span style="left:519.50px;top:834.38px;font-size:22px;font-weight:700;color:#393939;letter-spacing:-0.234px;">Craft:</span>
<span style="left:502.20px;top:874.38px;font-size:22px;transform-origin:0 0;transform:scaleX(0.8742);">ELECT</span>
<span style="left:784.50px;top:834.38px;font-size:22px;font-weight:700;color:#393939;letter-spacing:0.075px;">Start Date:</span>
<span style="left:767.50px;top:874.38px;font-size:22px;letter-spacing:1.194px;">22/10/20</span>
<span style="left:1030.00px;top:834.38px;font-size:22px;color:#4a4a4a;letter-spacing:-0.355px;">End Date:</span>
<span style="left:1310.50px;top:834.38px;font-size:22px;font-weight:700;color:#393939;letter-spacing:-0.387px;">Type:</span>
<span style="left:1292.50px;top:874.38px;font-size:22px;transform-origin:0 0;transform:scaleX(0.9276);">WORK</span>
<span style="left:500.00px;top:934.38px;font-size:22px;color:#4a4a4a;letter-spacing:-0.105px;">Skill Level:</span>
<span style="left:765.00px;top:934.38px;font-size:22px;color:#4a4a4a;letter-spacing:0.264px;">Start Time:</span>
<span style="left:1030.00px;top:934.38px;font-size:22px;color:#4a4a4a;letter-spacing:-0.006px;">End Time:</span>
<span style="left:1291.00px;top:934.38px;font-size:22px;color:#4a4a4a;letter-spacing:0.083px;">Timer Status:</span>
<span style="left:500.00px;top:1034.38px;font-size:22px;color:#4a4a4a;letter-spacing:-0.363px;">Crew:</span>
<span style="left:784.50px;top:1034.38px;font-size:22px;font-weight:700;color:#393939;letter-spacing:-0.456px;">Regular Hours:</span>
<span style="left:788.00px;top:1074.38px;font-size:22px;letter-spacing:0.557px;">0:00</span>
<span style="left:1030.00px;top:1034.38px;font-size:22px;color:#4a4a4a;letter-spacing:-0.340px;">Line Cost:</span>
<span style="left:1140.70px;top:1074.38px;font-size:22px;letter-spacing:0.391px;">0.00</span>
<span style="left:784.50px;top:1134.38px;font-size:22px;font-weight:700;color:#393939;letter-spacing:-0.254px;">Rate:</span>
<span style="left:861.80px;top:1174.38px;font-size:22px;letter-spacing:0.659px;">17.00</span>
<span style="left:500.50px;top:1352.88px;font-size:22px;color:#4a4a4a;letter-spacing:-0.295px;">Outside?</span>
<span style="left:500.50px;top:1452.88px;font-size:22px;color:#4a4a4a;letter-spacing:0.026px;">Vendor:</span>
<span style="left:500.50px;top:1552.88px;font-size:22px;color:#4a4a4a;letter-spacing:0.092px;">Contract:</span>
<span style="left:500.50px;top:1652.88px;font-size:22px;color:#4a4a4a;letter-spacing:-0.186px;">Revision:</span>
<span style="left:1166.70px;top:1351.38px;font-size:22px;color:#4a4a4a;letter-spacing:-0.285px;">Premium Pay Code:</span>
<span style="left:1166.70px;top:1451.38px;font-size:22px;color:#4a4a4a;letter-spacing:-0.144px;">Premium Pay Hours:</span>
<span style="left:1166.70px;top:1551.38px;font-size:22px;color:#4a4a4a;letter-spacing:-0.265px;">Premium Pay Rate:</span>
<span style="left:1166.70px;top:1651.38px;font-size:22px;color:#4a4a4a;letter-spacing:-0.125px;">Premium Rate Type:</span>
<span style="left:1829.00px;top:1351.38px;font-size:22px;color:#4a4a4a;letter-spacing:0.005px;">GL Debit Account:</span>
<span style="left:1829.00px;top:1451.38px;font-size:22px;color:#4a4a4a;letter-spacing:-0.014px;">GL Credit Account:</span>
<span style="left:1829.00px;top:1551.38px;font-size:22px;color:#4a4a4a;letter-spacing:0.088px;">Location:</span>
<span style="left:1829.00px;top:1651.38px;font-size:22px;color:#4a4a4a;letter-spacing:0.092px;">Asset:</span>
<span style="left:1829.00px;top:1751.38px;font-size:22px;color:#4a4a4a;letter-spacing:0.087px;">Memo:</span>
<div style="left:3236px;top:19.1px;width:80px;height:32px;background:repeating-linear-gradient(180deg,transparent 0 2.6px,#233446 2.6px 4px);"></div>
</div></body></html>
